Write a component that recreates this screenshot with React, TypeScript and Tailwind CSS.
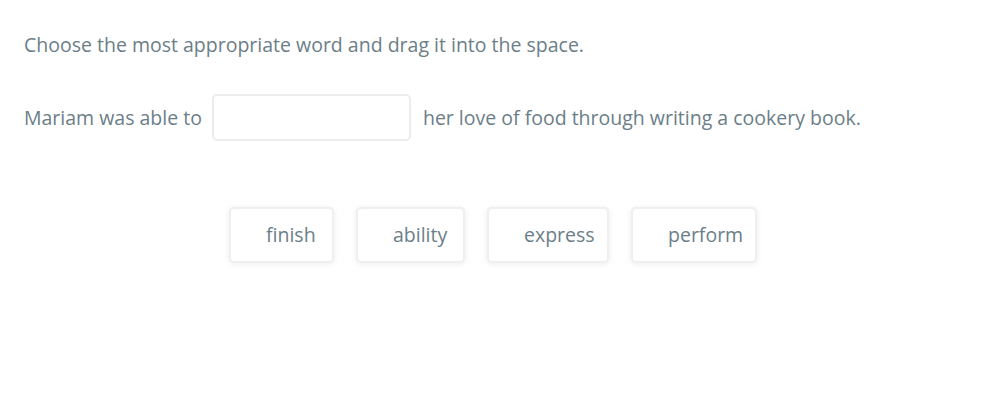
import React from 'react';

const words = [
  { label: 'finish', width: 'w-[105px]' },
  { label: 'ability', width: 'w-[109px]' },
  { label: 'express', width: 'w-[122px]' },
  { label: 'perform', width: 'w-[126px]' },
];

const App: React.FC = () => {
  return (
    <div
      className="w-[984px] h-[408px] bg-white text-[#6b7e88] text-[19.5px]"
      style={{ fontFamily: '"Open Sans", "Liberation Sans", sans-serif' }}
    >
      <div className="px-6 pt-[31px]">
        <p className="leading-[28px]">Choose the most appropriate word and drag it into the space.</p>
        <div className="mt-[35px] flex items-center h-[47px]">
          <span>Mariam was able to</span>
          <div className="ml-[10px] w-[199px] h-[47px] rounded-[5px] border-2 border-[#ececec] bg-white" />
          <span className="ml-[12px]">her love of food through writing a cookery book.</span>
        </div>
      </div>
      <div className="mt-[66px] flex justify-center gap-[22px] pl-[2px]">
        {words.map((w) => (
          <div
            key={w.label}
            className={`${w.width} h-[56px] flex items-center pl-[35px] rounded-[5px] border-2 border-[#efefef] bg-white shadow-[0_1px_6px_rgba(0,0,0,0.08)]`}
          >
            {w.label}
          </div>
        ))}
      </div>
    </div>
  );
};

export default App;
